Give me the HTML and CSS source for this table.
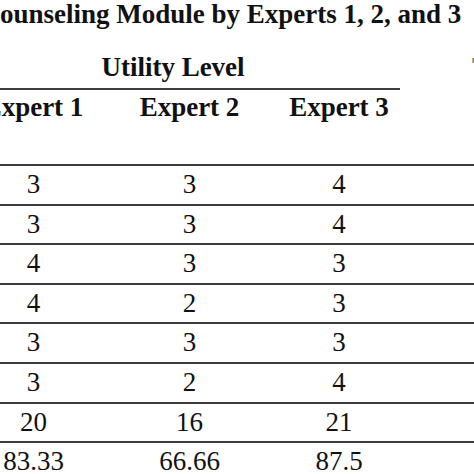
FILE: index.html
```html
<!DOCTYPE html>
<html lang="en">
<head>
<meta charset="utf-8">
<title>Utility Level by Experts</title>
<link rel="stylesheet" href="styles.css">
</head>
<body>
  <div class="title">Counseling Module by Experts 1, 2, and 3</div>
  <div class="table">
    <div class="group-row">
      <div class="group">Utility Level</div>
      <div class="extra">Total</div>
    </div>
    <div class="row head">
      <div class="cell">Expert 1</div>
      <div class="cell">Expert 2</div>
      <div class="cell c3">Expert 3</div>
      <div class="cell"></div>
    </div>
    <div class="row data"><div class="cell">3</div><div class="cell">3</div><div class="cell c3">4</div><div class="cell"></div></div>
    <div class="row data"><div class="cell">3</div><div class="cell">3</div><div class="cell c3">4</div><div class="cell"></div></div>
    <div class="row data"><div class="cell">4</div><div class="cell">3</div><div class="cell c3">3</div><div class="cell"></div></div>
    <div class="row data"><div class="cell">4</div><div class="cell">2</div><div class="cell c3">3</div><div class="cell"></div></div>
    <div class="row data"><div class="cell">3</div><div class="cell">3</div><div class="cell c3">3</div><div class="cell"></div></div>
    <div class="row data"><div class="cell">3</div><div class="cell">2</div><div class="cell c3">4</div><div class="cell"></div></div>
    <div class="row data"><div class="cell">20</div><div class="cell">16</div><div class="cell c3">21</div><div class="cell"></div></div>
    <div class="row data"><div class="cell">83.33</div><div class="cell">66.66</div><div class="cell c3">87.5</div><div class="cell"></div></div>
  </div>
</body>
</html>
```
FILE: styles.css
```css
html, body {
  margin: 0;
  padding: 0;
  background: #fff;
  overflow: hidden;
}

body {
  font-family: "Liberation Serif", "Times New Roman", serif;
  color: #111;
  font-size: 27px;
  line-height: 28px;
}

.title {
  font-weight: bold;
  margin-left: -19.5px;
  white-space: nowrap;
}

.table {
  margin-left: -54px;
}

.group-row {
  display: flex;
  margin-top: 25px;
  white-space: nowrap;
}

.group {
  width: 454px;
  flex: none;
  text-align: center;
  font-weight: bold;
  padding-bottom: 7px;
  border-bottom: 2px solid #3c3c3c;
}

.extra {
  margin-left: 72px;
  font-weight: bold;
  color: #777;
}

.row {
  display: grid;
  grid-template-columns: 175px 137px 142px 1fr;
  text-align: center;
  white-space: nowrap;
}

.head {
  font-weight: bold;
  padding: 3px 0 43px;
}

.data {
  border-top: 2px solid #3c3c3c;
  padding: 4px 0 5.6px;
}

.c3 {
  padding-left: 20px;
}
```
